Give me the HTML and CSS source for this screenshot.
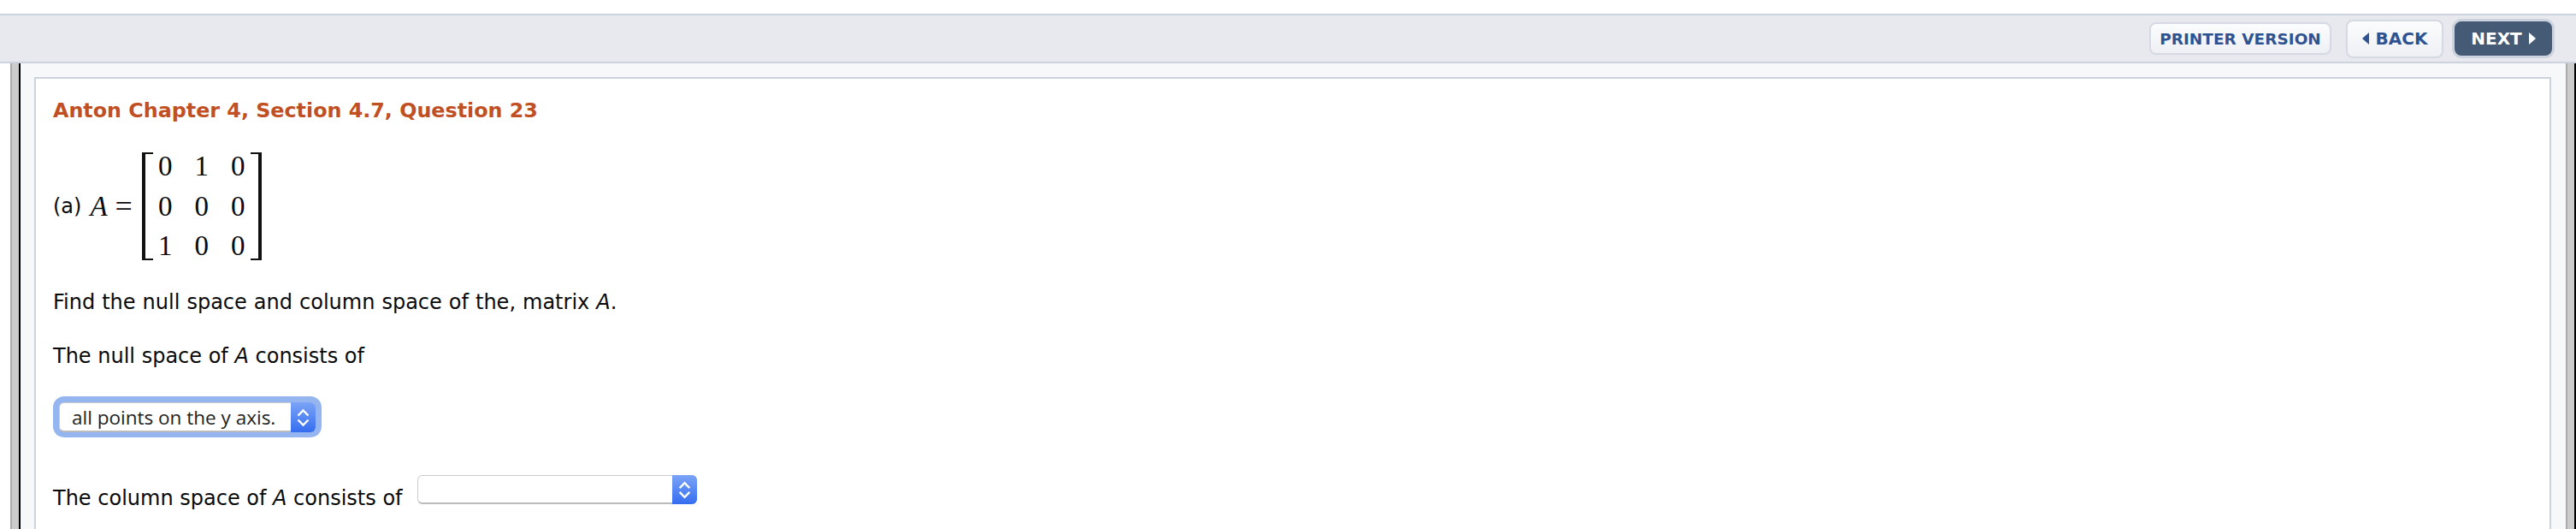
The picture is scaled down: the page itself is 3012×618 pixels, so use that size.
FILE: index.html
```html
<!DOCTYPE html>
<html lang="en">
<head>
<meta charset="utf-8">
<title>Anton Chapter 4, Section 4.7, Question 23</title>
<link rel="stylesheet" href="styles.css">
</head>
<body>
<header class="toolbar">
  <a class="btn btn-print">PRINTER VERSION</a>
  <a class="btn btn-back"><svg class="tri" viewBox="0 0 8 14"><path d="M8 0V14L0 7Z"/></svg>BACK</a>
  <a class="btn btn-next">NEXT<svg class="tri" viewBox="0 0 8 14"><path d="M0 0V14L8 7Z"/></svg></a>
</header>
<div class="frame">
  <div class="frame-inner">
    <main class="card">
      <h1 class="title">Anton Chapter 4, Section 4.7, Question 23</h1>
      <div class="eq">
        <span>(a)</span>
        <i class="math var">A</i>
        <span class="math equals">=</span>
        <div class="matrix">
          <span>0</span><span>1</span><span>0</span>
          <span>0</span><span>0</span><span>0</span>
          <span>1</span><span>0</span><span>0</span>
        </div>
      </div>
      <p class="find">Find the null space and column space of the, matrix <i>A</i>.</p>
      <p class="null">The null space of <i>A</i> consists of</p>
      <div class="sel-wrap focused">
        <select class="sel sel-a"><option>all points on the y axis.</option></select>
        <svg class="chev" viewBox="0 0 29 35"><path d="M8.500 15.500L14.500 9.500L20.500 15.500M8.500 20.500L14.500 26.500L20.500 20.500"/></svg>
      </div>
      <div class="col-row">
        <span class="col-text">The column space of <i>A</i> consists of</span>
        <div class="sel-wrap">
          <select class="sel sel-b"><option></option></select>
          <svg class="chev" viewBox="0 0 29 35"><path d="M8.500 15.500L14.500 9.500L20.500 15.500M8.500 20.500L14.500 26.500L20.500 20.500"/></svg>
        </div>
      </div>
    </main>
  </div>
</div>
</body>
</html>
```
FILE: styles.css
```css
html, body { margin: 0; height: 618px; overflow: hidden; background: #fff; }
body { font-family: "DejaVu Sans", Verdana, sans-serif; color: #0a0a0a; padding-top: 16px; box-sizing: border-box; }

.toolbar {
  height: 54px;
  background: #e7e9ee;
  border-top: 2px solid #ccd2de;
  border-bottom: 2px solid #ccd2de;
  display: flex;
  align-items: center;
  justify-content: flex-end;
  padding-right: 28px;
}
.btn {
  box-sizing: border-box;
  display: flex;
  align-items: center;
  justify-content: center;
  font-weight: bold;
  color: #2f5390;
  background: linear-gradient(#fbfcfd, #eef0f4);
  border: 2px solid #d4d9e3;
  border-radius: 8px;
}
.btn-print { width: 213px; height: 38px; font-size: 18.500px; margin-right: 17px; }
.btn-back { width: 114px; height: 45px; font-size: 20px; margin-right: 13px; gap: 8px; }
.btn-next {
  width: 114px; height: 40px; font-size: 20px; gap: 8px;
  color: #fff; background: #445a75; border-color: #445a75;
  box-shadow: 0 0 0 3px #ccd3de;
}
.tri { width: 8px; height: 14px; fill: currentColor; }

.frame {
  height: 560px;
  margin-left: 12px;
  border-left: 2px solid #aaa;
  border-right: 2px solid #000;
  background: #ccc;
  padding: 0 8px;
}
.frame-inner {
  height: 100%;
  box-sizing: border-box;
  background: #f7f8fa;
  border-left: 2px solid #000;
  border-right: 2px solid #aaa;
  padding: 16px 17px 0 16px;
}
.card {
  height: 100%;
  box-sizing: border-box;
  background: #fff;
  border: 2px solid #ccd2de;
  border-bottom: 0;
  padding: 22px 20px 0 20px;
}
.title { margin: 0; font-size: 23.800px; line-height: 30px; color: #c04f23; font-weight: bold; }

.eq { display: flex; align-items: center; margin-top: 34px; font-size: 24px; }
.math { font-family: "Liberation Serif", serif; font-size: 33px; }
.var { margin-left: 10px; }
.equals { font-size: 36px; margin: 0 11px 0 9px; }
.matrix {
  position: relative;
  display: grid;
  grid-template-columns: repeat(3, 42.500px);
  grid-auto-rows: 46.500px;
  align-content: center;
  width: 140px;
  height: 126px;
  box-sizing: border-box;
  padding: 0 0 0 2px;
  font-family: "Liberation Serif", serif;
  font-size: 33px;
  justify-items: center;
  align-items: center;
  border: 4px solid #111;
  border-top: 0;
  border-bottom: 0;
}
.matrix::before, .matrix::after {
  content: "";
  position: absolute;
  left: -4px; right: -4px;
  height: 2px;
  background: linear-gradient(90deg, #111 13px, transparent 13px, transparent calc(100% - 13px), #111 calc(100% - 13px));
}
.matrix::before { top: 0; }
.matrix::after { bottom: 0; }

p { margin: 0; font-size: 24px; line-height: 30px; }
.find { margin-top: 34px; word-spacing: 0.400px; }
.null { margin-top: 33px; }

.sel-wrap { position: relative; width: fit-content; display: block; line-height: 0; }
.sel {
  appearance: none;
  -webkit-appearance: none;
  box-sizing: border-box;
  height: 35px;
  margin: 0;
  padding: 0 0 0 14px;
  border: 1px solid #ccc;
  border-bottom: 2px solid #bbb;
  border-radius: 6px;
  background: #fff;
  font-family: "Open Sans", sans-serif;
  font-size: 22.500px;
  color: #222;
  outline: none;
}
.sel-a { width: 300px; }
.sel-b { width: 327px; height: 34px; }
.chev {
  position: absolute;
  top: 0;
  right: 0;
  width: 29px;
  height: 35px;
  border-radius: 0 6px 6px 0;
  background: linear-gradient(#7ba4f7, #356df0);
}
.sel-b + .chev { height: 34px; }
.chev path { fill: none; stroke: #fff; stroke-width: 2.400; }
.focused { margin: 32px 0 0 0; padding: 7px 7px 6px; width: 300px; border-radius: 13px; background: #94b5ef; }
.focused .chev { top: 7px; right: 7px; }

.col-row { display: flex; align-items: flex-start; margin-top: 44px; }
.col-text { font-size: 24px; line-height: 30px; margin-top: 12px; margin-right: 17px; }
```
